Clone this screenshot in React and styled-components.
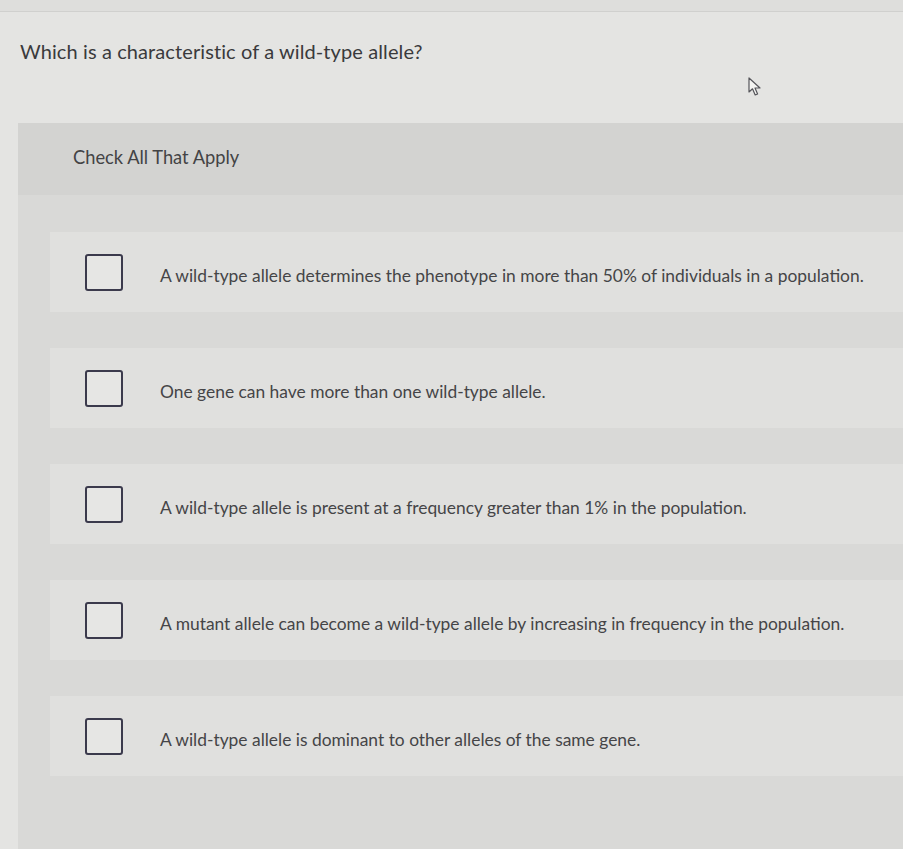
import React from 'react';
import styled, { createGlobalStyle } from 'styled-components';

const GlobalStyle = createGlobalStyle`
    html, body {
        margin: 0;
        padding: 0;
        background: #e3e3e1;
        overflow: hidden;
    }
    body {
        font-family: Lato, "Open Sans", sans-serif;
    }
`;

const options = [
    'A wild-type allele determines the phenotype in more than 50% of individuals in a population.',
    'One gene can have more than one wild-type allele.',
    'A wild-type allele is present at a frequency greater than 1% in the population.',
    'A mutant allele can become a wild-type allele by increasing in frequency in the population.',
    'A wild-type allele is dominant to other alleles of the same gene.',
];

const App = () => {
    return (
        <Page>
            <GlobalStyle />
            <TopStrip />
            <Question>Which is a characteristic of a wild-type allele?</Question>
            <Cursor viewBox="0 0 14 20" aria-hidden="true">
                <path d="M1 1 L1 15 L4.5 11.8 L7.2 18 L9.6 17 L7 11 L12 11 Z" fill="#f4f4f2" stroke="#55555a" strokeWidth="1.2" strokeLinejoin="round" />
            </Cursor>

            <Panel>
                <PanelHeader>Check All That Apply</PanelHeader>
                <OptionList>
                    {options.map((text) => (
                        <Option key={text}>
                            <Box />
                            <OptionText>{text}</OptionText>
                        </Option>
                    ))}
                </OptionList>
            </Panel>
        </Page>
    );
};

const Page = styled.div`
    position: relative;
    width: 903px;
    height: 849px;
    background: #e4e4e2;
    color: #3f3f40;
`;

const TopStrip = styled.div`
    height: 11px;
    background: #dededc;
    border-bottom: 1px solid #d0d0ce;
`;

const Question = styled.h1`
    margin: 0;
    padding: 27px 0 0 20px;
    height: 111px;
    box-sizing: border-box;
    font-size: 20px;
    font-weight: 400;
    color: #3a3a3c;
    letter-spacing: 0.1px;
`;

const Cursor = styled.svg`
    position: absolute;
    left: 748px;
    top: 77px;
    width: 14px;
    height: 20px;
`;

const Panel = styled.section`
    margin-left: 18px;
    width: 900px;
    height: 740px;
    background: #d9d9d7;
`;

const PanelHeader = styled.div`
    height: 72px;
    box-sizing: border-box;
    padding: 23px 0 0 55px;
    background: #d3d3d1;
    font-size: 18.3px;
    color: #434345;
`;

const OptionList = styled.div`
    display: flex;
    flex-direction: column;
    gap: 36px;
    padding: 37px 0 0 32px;
`;

const Option = styled.div`
    display: flex;
    align-items: center;
    gap: 37px;
    height: 80px;
    padding-left: 35px;
    background: #e0e0de;
`;

const Box = styled.span`
    flex: none;
    width: 38px;
    height: 37px;
    box-sizing: border-box;
    border: 2.5px solid #3b3a4c;
    border-radius: 3px;
    background: #e6e6e4;
`;

const OptionText = styled.span`
    font-size: 17.4px;
    color: #454547;
    padding-top: 6px;
`;

export default App;
